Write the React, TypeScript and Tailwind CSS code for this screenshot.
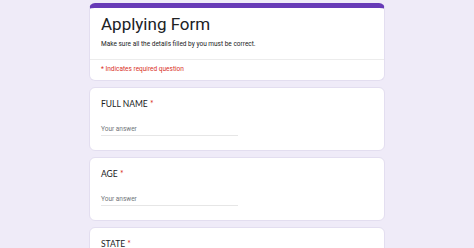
import React from "react";

const questions = ["FULL NAME", "AGE", "STATE"];

function Question({ label }: { label: string }) {
  return (
    <div className="h-[64px] shrink-0 rounded-md border border-[#e3def0] bg-white px-[11px] pt-[10px]">
      <div
        className="text-[8.5px] font-normal leading-[12px] text-[#202124]"
        style={{ fontFamily: "Lato, Roboto, sans-serif" }}
      >
        {label} <span className="text-[#d93025]">*</span>
      </div>
      <div className="mt-[14px] w-[137px] border-b border-[#e6e6e6] pb-[1px] text-[6.5px] leading-[10px] text-[#70757a]">
        Your answer
      </div>
    </div>
  );
}

export default function App() {
  return (
    <div
      className="flex h-[248px] w-[474px] justify-center overflow-hidden bg-[#efebf8]"
      style={{ fontFamily: "Roboto, 'Open Sans', sans-serif" }}
    >
      <div className="flex w-[296px] flex-col gap-[6px] pt-[3px]">
        <div className="h-[78px] shrink-0 overflow-hidden rounded-md border border-[#e3def0] bg-white border-t-[5px] border-t-[#673ab7]">
          <div className="px-[11px] pt-[6px]">
            <div className="text-[17px] leading-[20px] text-[#202124]">Applying Form</div>
            <div className="mt-[6px] text-[6.5px] leading-[9px] text-[#202124]">
              Make sure all the details filled by you must be correct.
            </div>
          </div>
          <div className="mt-[10px] border-t border-[#ececec] px-[11px] pt-[5px] text-[6.5px] leading-[9px] text-[#d93025]">
            * Indicates required question
          </div>
        </div>
        {questions.map((q) => (
          <Question key={q} label={q} />
        ))}
      </div>
    </div>
  );
}
